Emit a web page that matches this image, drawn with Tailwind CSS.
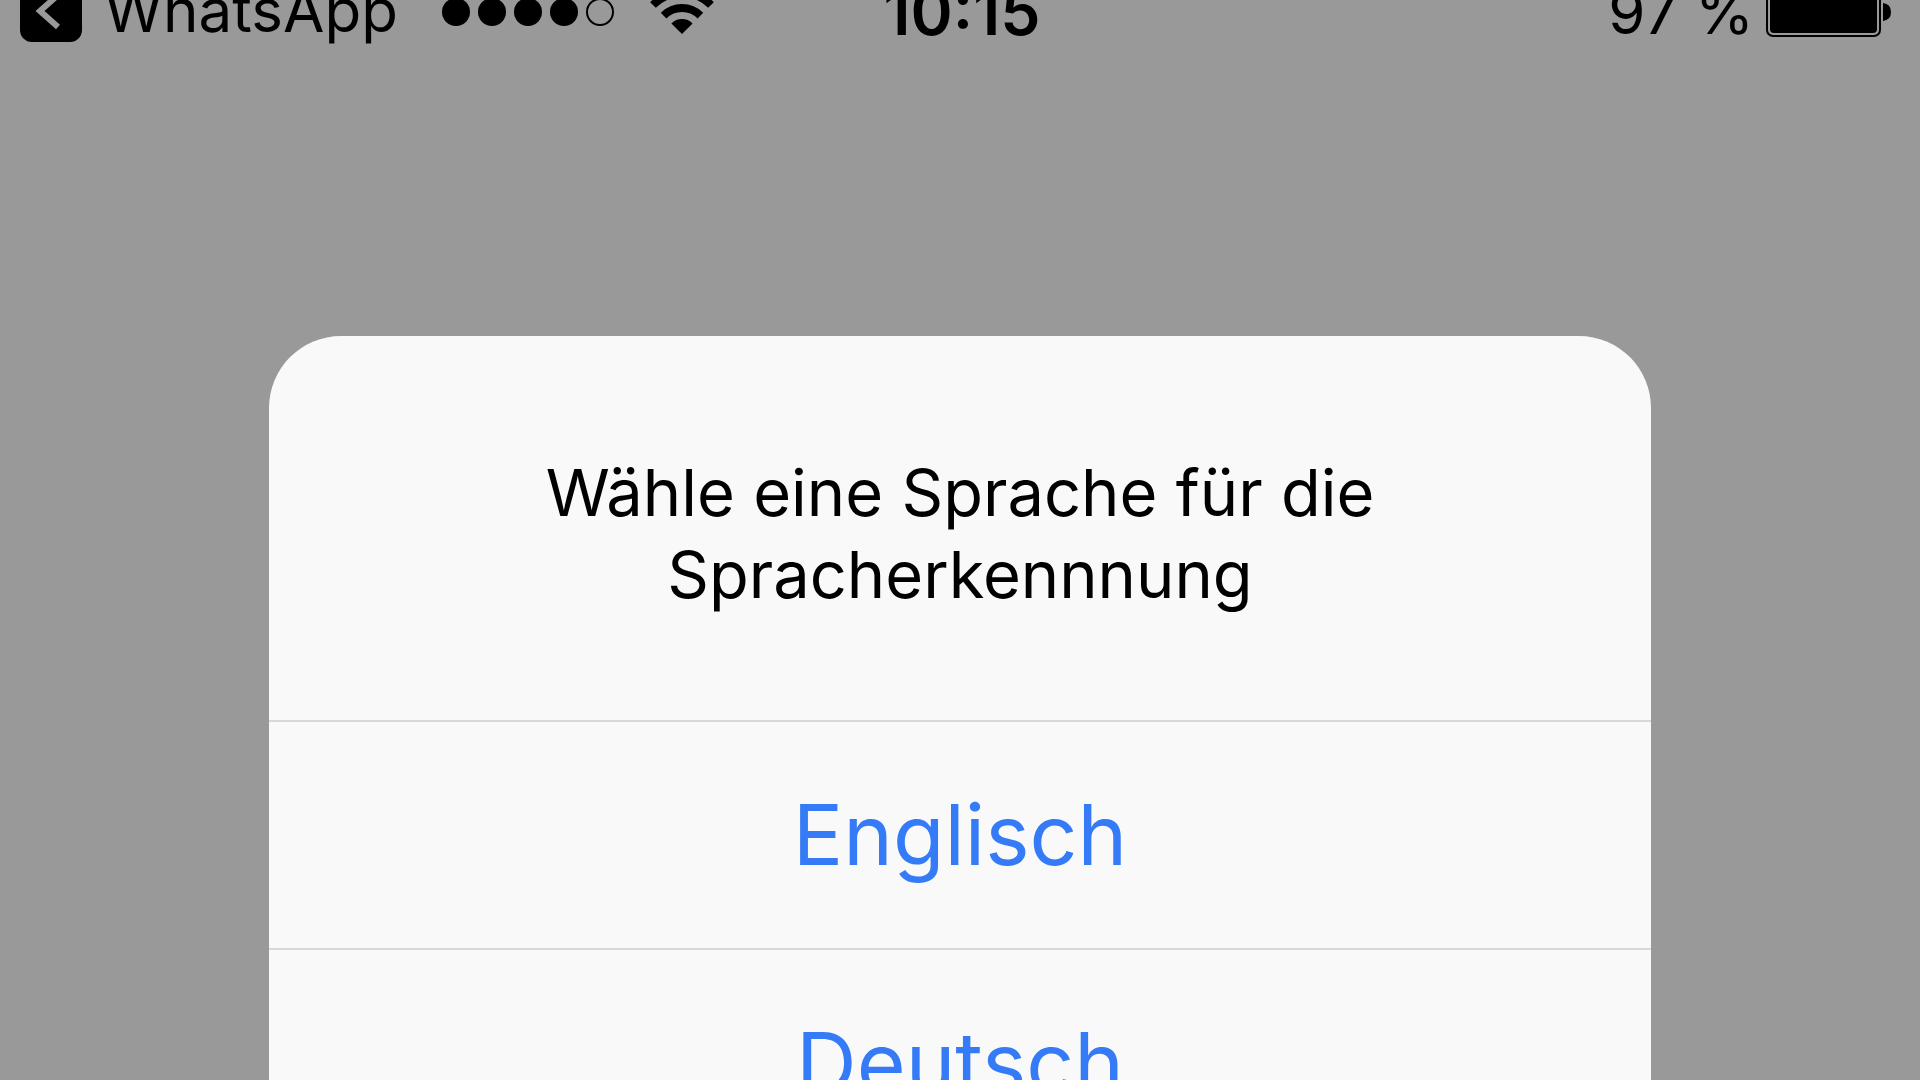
<!DOCTYPE html>
<html lang="de">
<head>
  <meta charset="UTF-8" />
  <meta name="viewport" content="width=device-width, initial-scale=1.0" />
  <title>Spracherkennung</title>
  <script src="https://cdn.jsdelivr.net/npm/@tailwindcss/browser@4"></script>
</head>
<body class="bg-[#999999] h-screen overflow-hidden font-['Inter','Liberation_Sans',sans-serif] text-black">
  <!-- status bar, partly scrolled off the top -->
  <header class="grid grid-cols-[1fr_auto_1fr] items-center h-16 -mt-5 pl-5 pr-7 text-[60px] leading-none whitespace-nowrap">
    <div class="flex items-center">
      <button class="flex items-center gap-[22px]" aria-label="Zurück zu WhatsApp">
        <svg class="w-[62px] h-[60px]" viewBox="0 0 62 60" fill="none">
          <rect width="62" height="60" rx="12" fill="#000" />
          <path d="M38 13 L20 29 L38 45" stroke="#999" stroke-width="6" />
        </svg>
        <span class="pb-1">WhatsApp</span>
      </button>
      <div class="flex gap-2 ml-11">
        <span class="size-7 rounded-full bg-black"></span>
        <span class="size-7 rounded-full bg-black"></span>
        <span class="size-7 rounded-full bg-black"></span>
        <span class="size-7 rounded-full bg-black"></span>
        <span class="size-7 rounded-full border-2 border-black"></span>
      </div>
      <svg class="w-16 h-12 ml-9" viewBox="0 0 64 48" fill="none">
        <path d="M3 17 A41 41 0 0 1 61 17" stroke="#000" stroke-width="8" />
        <path d="M13.6 27.6 A26 26 0 0 1 50.4 27.6" stroke="#000" stroke-width="8" />
        <path d="M32 46 L21.4 35.4 A15 15 0 0 1 42.6 35.4 Z" fill="#000" />
      </svg>
    </div>
    <time class="pl-3 text-[64px] font-semibold">10:15</time>
    <div class="flex items-center justify-end gap-3">
      <span class="text-[60px]">97 %</span>
      <svg class="w-[126px] h-[50px]" viewBox="0 0 126 50" fill="none">
        <rect x="1" y="1" width="113" height="48" rx="6" stroke="#000" stroke-width="2" />
        <rect x="4" y="4" width="107" height="42" rx="4" fill="#000" />
        <path d="M117 16 Q125 17 125 25 Q125 33 117 34 Z" fill="#000" />
      </svg>
    </div>
  </header>

  <main class="w-[72%] mx-auto mt-[292px] rounded-t-[72px] bg-[#f9f9f9] text-center" role="dialog" aria-labelledby="dialog-title">
    <h1 id="dialog-title" class="px-60 pt-[116px] pb-[104px] text-[65px] leading-[82px]">Wähle eine Sprache für die Spracherkennnung</h1>
    <button class="block w-full h-[228px] border-t-2 border-[#d8d8d8] text-[84px] leading-none text-[#357af6]">Englisch</button>
    <button class="block w-full h-[228px] border-t-2 border-[#d8d8d8] text-[84px] leading-none text-[#357af6]">Deutsch</button>
  </main>
</body>
</html>
